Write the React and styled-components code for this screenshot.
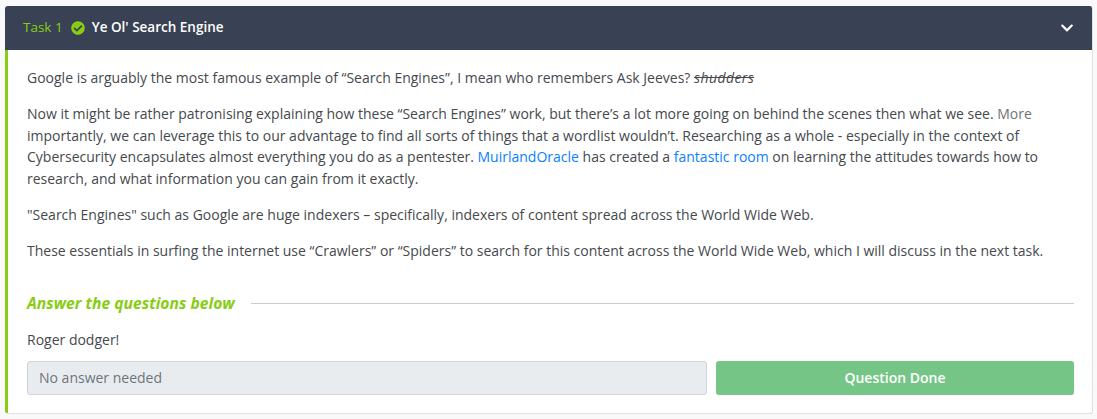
import React from "react";
import styled, { createGlobalStyle } from "styled-components";
import { FaCheckCircle, FaChevronDown } from "react-icons/fa";

const GlobalStyle = createGlobalStyle`
  html, body {
    margin: 0;
    padding: 0;
    background: #f9f9f9;
  }

  body {
    font-family: "Open Sans", "Noto Sans", sans-serif;
    font-size: 14px;
    line-height: 21.6px;
    color: #45494d;
  }
`;

const Page = styled.div`
  padding: 6px 4px 5px 5px;
`;

const Card = styled.section`
  background: #fff;
  border-right: 1px solid #dfe1e3;
  border-bottom: 1px solid #dfe1e3;
  border-radius: 3px;
  overflow: hidden;
`;

const Header = styled.header`
  height: 44px;
  background: #384254;
  display: flex;
  align-items: center;
  padding: 0 18px;
  font-size: 13.5px;
`;

const TaskNo = styled.span`
  color: #88cc14;
`;

const TaskCheck = styled(FaCheckCircle)`
  color: #88cc14;
  font-size: 14px;
  margin: 0 7px 0 8px;
`;

const TaskTitle = styled.span`
  color: #fff;
  font-weight: 600;
  flex: 1;
`;

const Chevron = styled(FaChevronDown)`
  color: #fff;
  font-size: 14px;
`;

const Body = styled.div`
  border-left: 3px solid #88cc14;
  padding: 17px 18px 18px 19px;
`;

const Para = styled.p`
  margin: 0 0 14.4px;
`;

const Strike = styled.s`
  font-style: italic;
  letter-spacing: 0.4px;
`;

const Muted = styled.span`
  color: #6f7376;
`;

const Link = styled.a`
  color: #0a80ff;
  text-decoration: none;
`;

const AnswerHeading = styled.div`
  display: flex;
  align-items: center;
  gap: 16px;
  margin: 31px 0 15px;
  color: #88cc14;
  font-size: 15.7px;
  line-height: 22px;
  font-weight: 700;
  font-style: italic;

  &::after {
    content: "";
    flex: 1;
    height: 1px;
    background: #c9ccd0;
  }
`;

const Question = styled.p`
  margin: 0 0 10px;
`;

const AnswerRow = styled.div`
  display: grid;
  grid-template-columns: 680px 1fr;
  gap: 9px;
`;

const AnswerInput = styled.div`
  height: 34px;
  box-sizing: border-box;
  background: #e9ecef;
  border: 1px solid #ced4da;
  border-radius: 3px;
  padding: 0 11px;
  display: flex;
  align-items: center;
  color: #6c757d;
`;

const DoneButton = styled.button`
  height: 34px;
  background: #75c686;
  border: 0;
  border-radius: 3px;
  color: #fff;
  font: inherit;
  font-weight: 600;
`;

export default function App() {
  return (
    <>
      <GlobalStyle />
      <Page>
        <Card>
          <Header>
            <TaskNo>Task 1</TaskNo>
            <TaskCheck />
            <TaskTitle>Ye Ol' Search Engine</TaskTitle>
            <Chevron />
          </Header>
          <Body>
            <Para>
              Google is arguably the most famous example of “Search Engines”, I mean who remembers Ask Jeeves?{" "}
              <Strike>shudders</Strike>
            </Para>
            <Para>
              Now it might be rather patronising explaining how these “Search Engines” work, but there’s a lot more
              going on behind the scenes then what we see. <Muted>More</Muted> importantly, we can leverage this to our
              advantage to find all sorts of things that a wordlist wouldn’t. Researching as a whole - especially in the
              context of Cybersecurity encapsulates almost everything you do as a pentester.{" "}
              <Link>MuirlandOracle</Link> has created a <Link>fantastic room</Link> on learning the attitudes towards
              how to research, and what information you can gain from it exactly.
            </Para>
            <Para>
              "Search Engines" such as Google are huge indexers – specifically, indexers of content spread across the
              World Wide Web.
            </Para>
            <Para>
              These essentials in surfing the internet use “Crawlers” or “Spiders” to search for this content across
              the World Wide Web, which I will discuss in the next task.
            </Para>
            <AnswerHeading>Answer the questions below</AnswerHeading>
            <Question>Roger dodger!</Question>
            <AnswerRow>
              <AnswerInput>No answer needed</AnswerInput>
              <DoneButton>Question Done</DoneButton>
            </AnswerRow>
          </Body>
        </Card>
      </Page>
    </>
  );
}
